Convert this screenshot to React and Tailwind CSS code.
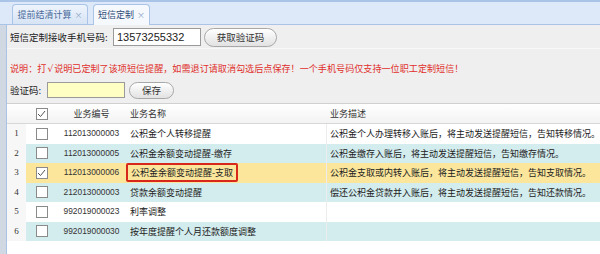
import React from "react";

const rows = [
  { n: 1, code: "112013000003", name: "公积金个人转移提醒", desc: "公积金个人办理转移入账后，将主动发送提醒短信，告知转移情况。" },
  { n: 2, code: "112013000005", name: "公积金余额变动提醒-缴存", desc: "公积金缴存入账后，将主动发送提醒短信，告知缴存情况。" },
  { n: 3, code: "112013000006", name: "公积金余额变动提醒-支取", desc: "公积金支取或内转入账后，将主动发送提醒短信，告知支取情况。", checked: true, hl: true },
  { n: 4, code: "212013000003", name: "贷款余额变动提醒", desc: "偿还公积金贷款并入账后，将主动发送提醒短信，告知还款情况。" },
  { n: 5, code: "992019000023", name: "利率调整", desc: "" },
  { n: 6, code: "992019000030", name: "按年度提醒个人月还款额度调整", desc: "" },
];

const cjk = { fontFamily: '"Microsoft YaHei", "Noto Sans CJK SC", sans-serif' };

const Check = ({ on }) => (
  <span className="flex h-[12px] w-[12px] items-center justify-center border border-[#8a8a8a] bg-white">
    {on && (
      <svg width="9" height="8" viewBox="0 0 9 8">
        <path d="M1 4 L3.5 6.5 L8 1" fill="none" stroke="#555" strokeWidth="1" />
      </svg>
    )}
  </span>
);

const PillButton = ({ children, className }) => (
  <button
    className={
      "flex items-center justify-center rounded-full border border-[#a8a8a8] bg-gradient-to-b from-white to-[#e2e2e2] text-[9.5px] text-[#333] shadow-[inset_0_1px_0_#fff] " +
      className
    }
    style={cjk}
  >
    {children}
  </button>
);

export default function App() {
  return (
    <div className="flex h-[254px] w-[600px] flex-col overflow-hidden bg-white text-[#222]" style={cjk}>
      {/* tab strip */}
      <div className="flex h-[25px] items-end border-t-2 border-b border-[#a9c4e6] bg-[#dde9f8] pl-[12px]">
        <div className="flex h-[20px] w-[76px] items-center justify-center gap-[3px] rounded-t-[4px] border border-b-0 border-[#a9c4e6] bg-gradient-to-b from-[#eef4fc] to-[#d7e4f5] text-[9px] text-[#4a6a99]">
          <span>提前结清计算</span>
          <span className="text-[8px] text-[#8aa2c4]">×</span>
        </div>
        <div className="ml-[5px] flex h-[21px] w-[57px] -mb-px items-center justify-center gap-[3px] rounded-t-[4px] border border-b-0 border-[#a9c4e6] bg-[#f5f8fc] text-[9px] text-[#2d4a78]">
          <span>短信定制</span>
          <span className="text-[8px] text-[#8aa2c4]">×</span>
        </div>
      </div>

      <div className="flex flex-1">
        {/* left edge */}
        <div className="w-[7px] border-r border-[#a9c4e6] bg-[#cfd8e3]" />

        <div className="flex flex-1 flex-col">
          {/* form area */}
          <div className="bg-[#efefef]">
            <div className="flex h-[24px] items-center border-b border-[#f8f8f8] pl-[3px] pt-[1px]">
              <span className="w-[103px] text-[9.5px] text-[#222]">短信定制接收手机号码:</span>
              <span
                className="flex h-[18px] w-[88px] items-center border border-[#9a9a9a] bg-white pl-[3px] text-[11px] text-[#222]"
                style={{ fontFamily: '"Liberation Sans", Arial, sans-serif' }}
              >
                13573255332
              </span>
              <PillButton className="ml-[3px] h-[19px] w-[73px]">获取验证码</PillButton>
            </div>
            <div className="flex h-[31px] items-end pb-[4px] pl-[3px] text-[9.1px] text-[#e0302c]">
              <span>
                说明：打
                <span className="px-[1px] text-[9px]" style={{ fontFamily: '"DejaVu Sans", sans-serif' }}>
                  √
                </span>
                说明已定制了该项短信提醒，如需退订请取消勾选后点保存！一个手机号码仅支持一位职工定制短信！
              </span>
            </div>
            <div className="flex h-[20px] items-center pl-[3px]">
              <span className="w-[37px] text-[9.5px]">验证码:</span>
              <span className="h-[16px] w-[78px] border border-[#9a9a9a] bg-[#ffffc4]" />
              <PillButton className="ml-[4px] h-[17px] w-[45px]">保存</PillButton>
            </div>
            <div className="h-[3px]" />
          </div>

          {/* grid */}
          <div className="flex flex-1 flex-col border-t border-[#d0d0d0] bg-white">
            <div className="flex h-[20px] items-center border-b border-[#d8d8d8] bg-gradient-to-b from-white to-[#f3f3f3] text-[9px] text-[#333]">
              <div className="w-[19px]" />
              <div className="flex w-[32px] justify-center">
                <Check on />
              </div>
              <div className="w-[67px] text-center">业务编号</div>
              <div className="w-[201px] pl-[5px]">业务名称</div>
              <div className="flex-1 pl-[4px]">业务描述</div>
            </div>
            {rows.map((r) => (
              <div key={r.n} className="flex h-[19.5px] items-center text-[9px]">
                <div
                  className="flex h-full w-[19px] items-center justify-center bg-[#f7f7f7] text-[9px] text-[#333]"
                  style={{ fontFamily: '"Liberation Serif", serif' }}
                >
                  {r.n}
                </div>
                <div
                  className={
                    "flex h-full flex-1 items-center " +
                    (r.hl ? "bg-[#fbe69b]" : r.n % 2 === 0 ? "bg-[#d3ecee]" : "bg-white")
                  }
                >
                  <div className="flex w-[32px] justify-center">
                    <Check on={r.checked} />
                  </div>
                  <div
                    className="w-[67px] text-center text-[8.4px] text-[#333]"
                    style={{ fontFamily: '"Liberation Sans", Arial, sans-serif' }}
                  >
                    {r.code}
                  </div>
                  <div className="flex h-full w-[201px] items-center pl-[1px]">
                    {r.hl ? (
                      <span className="flex h-[19px] items-center rounded-[2px] border-2 border-[#d8281c] px-[3px]">{r.name}</span>
                    ) : (
                      <span className="pl-[4px]">{r.name}</span>
                    )}
                  </div>
                  <div className="flex h-full flex-1 items-center border-l border-[#ececec] pl-[3px] whitespace-nowrap">
                    {r.desc}
                  </div>
                </div>
              </div>
            ))}
          </div>
        </div>
      </div>
    </div>
  );
}
